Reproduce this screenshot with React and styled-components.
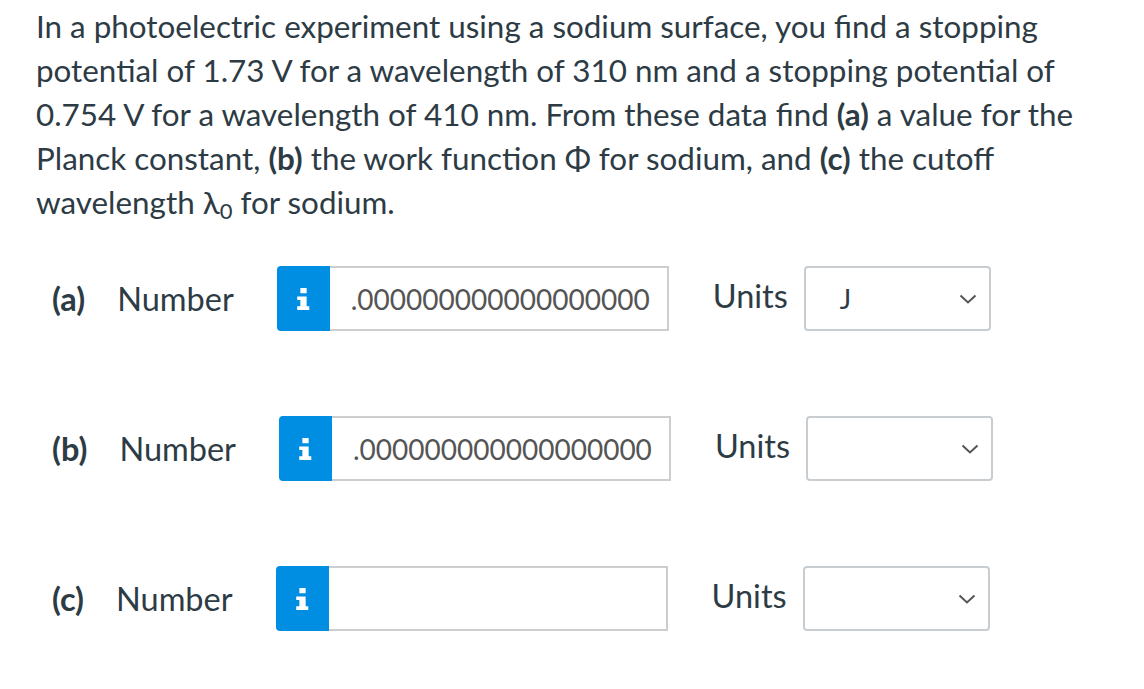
import React from "react";
import styled, { createGlobalStyle } from "styled-components";

const Global = createGlobalStyle`
  html, body { margin: 0; padding: 0; background: #ffffff; }
  body { font-family: Lato, "Open Sans", sans-serif; color: #2d3b45; }
`;

const Page = styled.div`
  width: 1144px;
  height: 689px;
  box-sizing: border-box;
  padding: 4px 0 0 36px;
  overflow: hidden;
`;

const Question = styled.p`
  margin: 0;
  width: 1100px;
  font-size: 31.4px;
  line-height: 44px;
  color: #2d3b45;
  white-space: nowrap;
`;

const Sub = styled.span`
  font-size: 22px;
  vertical-align: -5px;
  line-height: 0;
`;

const Parts = styled.div`
  display: flex;
  flex-direction: column;
  gap: 85px;
  margin-top: 42px;
  padding-left: 16px;
`;

const Row = styled.div`
  display: flex;
  align-items: center;
  height: 65px;
`;

const PartLabel = styled.span`
  font-weight: 700;
  font-size: 32.5px;
  color: #2d3b45;
`;

const FieldLabel = styled.span`
  font-size: 32.5px;
  color: #2d3b45;
  margin-left: ${(p) => p.$gap}px;
  position: relative;
  top: ${(p) => p.$lift || 0}px;
`;

const InputGroup = styled.div`
  display: flex;
  margin-left: 43px;
  height: 65px;
`;

const InfoButton = styled.div`
  width: 53px;
  height: 65px;
  background: #008ee2;
  border-radius: 4px 0 0 4px;
  display: flex;
  align-items: center;
  justify-content: center;
`;

const NumberBox = styled.div`
  width: 339px;
  height: 65px;
  box-sizing: border-box;
  border: 2px solid #cdcdcd;
  border-left: none;
  display: flex;
  align-items: center;
  padding-left: 21px;
  font-size: 28px;
  color: #555555;
`;

const Select = styled.div`
  margin-left: 16px;
  width: 187px;
  height: 65px;
  box-sizing: border-box;
  border: 2px solid #c7cdd1;
  border-radius: 4px;
  display: flex;
  align-items: center;
  justify-content: space-between;
  padding: 0 12px 0 34px;
  font-size: 27px;
  color: #2d3b45;
`;

const InfoIcon = () => (
  <svg width="13" height="22" viewBox="0 0 12 21">
    <rect x="3" y="0" width="6" height="5" fill="#fff" />
    <path d="M0 8 H9 V17.5 H11.5 V21 H0 V17.5 H3 V11.5 H0 Z" fill="#fff" />
  </svg>
);

const Chevron = () => (
  <svg width="18" height="10" viewBox="0 0 18 10">
    <path d="M1.5 1.5 L9 8.5 L16.5 1.5" fill="none" stroke="#555" strokeWidth="2" />
  </svg>
);

const parts = [
  { key: "(a)", value: ".000000000000000000", unit: "J", gap: 32 },
  { key: "(b)", value: ".000000000000000000", unit: "", gap: 32 },
  { key: "(c)", value: "", unit: "", gap: 32 },
];

export default function App() {
  return (
    <>
      <Global />
      <Page>
        <Question>
          In a photoelectric experiment using a sodium surface, you find a stopping
          <br />
          potential of 1.73&nbsp;V for a wavelength of 310&nbsp;nm and a stopping potential of
          <br />
          0.754&nbsp;V for a wavelength of 410&nbsp;nm. From these data find <b>(a)</b> a value for the
          <br />
          Planck constant, <b>(b)</b> the work function Φ for sodium, and <b>(c)</b> the cutoff
          <br />
          wavelength λ<Sub>0</Sub> for sodium.
        </Question>
        <Parts>
          {parts.map((p) => (
            <Row key={p.key}>
              <PartLabel>{p.key}</PartLabel>
              <FieldLabel $gap={p.gap}>Number</FieldLabel>
              <InputGroup>
                <InfoButton>
                  <InfoIcon />
                </InfoButton>
                <NumberBox>{p.value}</NumberBox>
              </InputGroup>
              <FieldLabel $gap={44} $lift={-3}>Units</FieldLabel>
              <Select>
                <span>{p.unit}</span>
                <Chevron />
              </Select>
            </Row>
          ))}
        </Parts>
      </Page>
    </>
  );
}
